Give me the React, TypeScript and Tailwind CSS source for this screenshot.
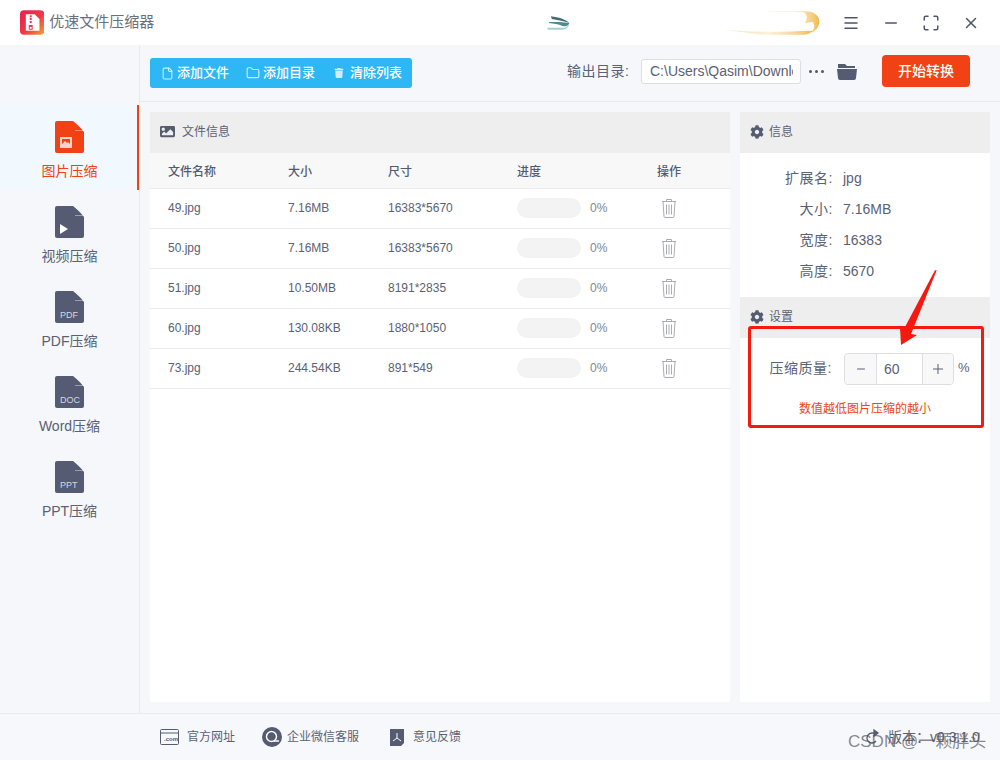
import { File, Folder, Menu, Minus, Maximize, X } from 'lucide-react';
import { FaCog, FaImage, FaTrash } from 'react-icons/fa';

const files = [
  { name: '49.jpg', size: '7.16MB', dim: '16383*5670' },
  { name: '50.jpg', size: '7.16MB', dim: '16383*5670' },
  { name: '51.jpg', size: '10.50MB', dim: '8191*2835' },
  { name: '60.jpg', size: '130.08KB', dim: '1880*1050' },
  { name: '73.jpg', size: '244.54KB', dim: '891*549' },
];

const details = [
  { label: '扩展名:', value: 'jpg' },
  { label: '大小:', value: '7.16MB' },
  { label: '宽度:', value: '16383' },
  { label: '高度:', value: '5670' },
];

const DocIcon = ({ color, children }: { color: string; children?: React.ReactNode }) => (
  <svg width="29" height="32" viewBox="0 0 29 32">
    <path d="M2 0H18C22 3 26 7 29 11V30a2 2 0 0 1-2 2H2a2 2 0 0 1-2-2V2a2 2 0 0 1 2-2Z" fill={color} />
    <path d="M20 9.5H29" fill="none" stroke="#fff" strokeOpacity="0.7" strokeWidth="0.6" />
    {children}
  </svg>
);

const NavItem = ({ label, active, icon }: { label: string; active?: boolean; icon: React.ReactNode }) => (
  <div
    className={`h-[85px] flex flex-col items-center pt-[16px] ${
      active ? 'bg-[#f2f9fe] text-[#f04214] shadow-[inset_-2px_0_0_#f04214]' : 'text-[#5a6175]'
    }`}
  >
    {icon}
    <span className="text-[14px] leading-[20px] mt-[8px]">{label}</span>
  </div>
);

const docLabel = (text: string) => (
  <text x="5" y="27" fontSize="9" fill="#d5d8e0" fontFamily="Liberation Sans, sans-serif">
    {text}
  </text>
);

const TrashIcon = () => (
  <svg width="16" height="20" viewBox="0 0 16 20" fill="none" stroke="#a8acb4" strokeWidth="1">
    <path d="M1 3.5H15M5.5 3.5V1.5H10.5V3.5M2 3.5L3 18.5a1 1 0 0 0 1 1H12a1 1 0 0 0 1-1L14 3.5" />
    <path d="M5.5 6.5V16.5M8 6.5V16.5M10.5 6.5V16.5" />
  </svg>
);

const App = () => {
  return (
    <div className="relative w-[1000px] h-[760px] overflow-hidden flex flex-col bg-[#f5f7fa] text-[#5a6175] font-['Liberation_Sans','Noto_Sans_CJK_SC',sans-serif]">
      {/* Title bar */}
      <header className="h-[45px] shrink-0 bg-white flex items-center pl-[20px] pr-[20px]">
        <svg width="25" height="25" viewBox="0 0 25 25">
          <defs>
            <linearGradient id="logo" x1="0" y1="0" x2="1" y2="1">
              <stop offset="0" stopColor="#ea1f4e" />
              <stop offset="0.55" stopColor="#ee3a45" />
              <stop offset="1" stopColor="#f8a52f" />
            </linearGradient>
          </defs>
          <rect width="25" height="25" rx="4" fill="url(#logo)" />
          <path d="M6 4H15L20 9V21H6Z" fill="#fff" />
          <path d="M10 5H12V7H10ZM10 8H12V10H10ZM10 11H12V13H10ZM9 15H13V20H9Z" fill="#ea3350" />
          <rect x="10" y="17" width="2" height="2" fill="#fff" />
        </svg>
        <span className="ml-[5px] w-[105px] text-[15px] whitespace-nowrap text-[#6a7080]">优速文件压缩器</span>
        <svg className="ml-[393px]" width="24" height="16" viewBox="0 0 24 16">
          <path d="M4 1C12 2 19 4 23 8C16 6 10 5 5 4Z" fill="#3f6d74" />
          <path d="M2 7C9 7 17 7 23 8C22 11 19 12 16 11C12 9 7 9 2 8Z" fill="#4f8a8f" />
          <path d="M0 13H16C19 13 21 12 23 9C22 13 19 15 15 15H1Z" fill="#a7cfcf" />
        </svg>
        <svg className="ml-[151px]" width="102" height="27" viewBox="0 0 102 27">
          <defs>
            <linearGradient id="fade" x1="0" y1="0" x2="1" y2="0">
              <stop offset="0" stopColor="#f3c877" stopOpacity="0.6" />
              <stop offset="0.5" stopColor="#f3c877" stopOpacity="0.25" />
              <stop offset="0.9" stopColor="#f0bc55" stopOpacity="0.8" />
              <stop offset="1" stopColor="#f0b64a" />
            </linearGradient>
          </defs>
          <path d="M2 21C30 24 62 23 94 22C90 25 88 26 84 26H42Z" fill="url(#fade)" />
          <path d="M44 2H86C96 2 101 8 100 14C99 19 96 22 92 24C95 19 96 16 93 13L85 14C88 9 88 6 84 3Z" fill="url(#fade)" />
        </svg>
        <div className="ml-[21px] flex items-center gap-[22px] text-[#4f566b]">
          <Menu size={18} strokeWidth={2} />
          <Minus size={18} strokeWidth={2} />
          <Maximize size={18} strokeWidth={2} />
          <X size={18} strokeWidth={2} />
        </div>
      </header>

      <div className="flex-1 flex min-h-0">
        {/* Sidebar */}
        <aside className="w-[140px] shrink-0 border-r border-[#e8eaee] pt-[60px]">
          <NavItem
            active
            label="图片压缩"
            icon={
              <DocIcon color="#f04214">
                <rect x="5" y="16" width="12" height="11" fill="#fbd6c8" />
                <rect x="7" y="18" width="8" height="5" fill="#f04214" />
                <path d="M7 23L10 20L12 22L13 21L15 23Z" fill="#fbd6c8" />
              </DocIcon>
            }
          />
          <NavItem
            label="视频压缩"
            icon={
              <DocIcon color="#545b73">
                <path d="M5 18L13 23L5 28Z" fill="#fff" />
              </DocIcon>
            }
          />
          <NavItem label="PDF压缩" icon={<DocIcon color="#545b73">{docLabel('PDF')}</DocIcon>} />
          <NavItem label="Word压缩" icon={<DocIcon color="#545b73">{docLabel('DOC')}</DocIcon>} />
          <NavItem label="PPT压缩" icon={<DocIcon color="#545b73">{docLabel('PPT')}</DocIcon>} />
        </aside>

        <div className="flex-1 min-w-0 flex flex-col">
          {/* Toolbar */}
          <div className="h-[57px] shrink-0 border-b border-[#e8eaee] flex items-start pl-[10px]">
            <div className="mt-[13px] h-[30px] w-[262px] rounded-[3px] bg-[#2db7f5] flex items-center pl-[11px] text-[13px] font-medium text-white">
              <File size={13} className="text-[#cdeefd]" />
              <span className="ml-[3px]">添加文件</span>
              <Folder size={14} className="ml-[17px] text-[#cdeefd]" />
              <span className="ml-[3px]">添加目录</span>
              <FaTrash size={10} className="ml-[19px] text-[#cdeefd]" />
              <span className="ml-[6px]">清除列表</span>
            </div>
            <span className="ml-[155px] mt-[16px] w-[63px] text-[14px] leading-[20px] tracking-[0.5px] whitespace-nowrap">输出目录:</span>
            <div className="ml-[11px] mt-[14px] w-[160px] h-[25px] rounded-[3px] border border-[#dcdee2] bg-white pl-[8px] text-[14px] leading-[23px] whitespace-nowrap">
              <div className="w-[143px] overflow-hidden">C:\Users\Qasim\Downloads</div>
            </div>
            <div className="ml-[8px] mt-[25px] flex gap-[3px]">
              <span className="w-[3px] h-[3px] rounded-full bg-[#4f566b]" />
              <span className="w-[3px] h-[3px] rounded-full bg-[#4f566b]" />
              <span className="w-[3px] h-[3px] rounded-full bg-[#4f566b]" />
            </div>
            <svg className="ml-[13px] mt-[17px]" width="20" height="18" viewBox="0 0 20 18">
              <path d="M1 2H8L10 4H18V6H1Z" fill="#545b73" />
              <path d="M0 7H20L19 16a2 2 0 0 1-2 2H3a2 2 0 0 1-2-2Z" fill="#545b73" />
            </svg>
            <button className="ml-[25px] mt-[10px] w-[88px] h-[32px] rounded-[4px] bg-[#f04214] text-white text-[14px] font-medium">
              开始转换
            </button>
          </div>

          {/* Panels */}
          <div className="h-[600px] shrink-0 flex gap-[10px] pl-[10px] pt-[10px]">
            <section className="w-[580px] h-[590px] bg-white">
              <div className="h-[41px] pb-[2px] bg-[#eeeeee] flex items-center pl-[10px] text-[12px]">
                <FaImage size={15} className="text-[#545b73]" />
                <span className="ml-[7px]">文件信息</span>
              </div>
              <div className="h-[36px] pt-[2px] bg-[#f8f8f9] border-b border-[#e8eaec] flex items-center text-[12px] font-medium text-[#515a6e]">
                <span className="w-[138px] pl-[18px]">文件名称</span>
                <span className="w-[100px]">大小</span>
                <span className="w-[129px]">尺寸</span>
                <span className="w-[140px]">进度</span>
                <span>操作</span>
              </div>
              {files.map((file) => (
                <div key={file.name} className="h-[40px] pb-[2px] border-b border-[#e8eaec] flex items-center text-[12px]">
                  <span className="w-[138px] pl-[18px]">{file.name}</span>
                  <span className="w-[100px]">{file.size}</span>
                  <span className="w-[129px]">{file.dim}</span>
                  <div className="w-[140px] flex items-center">
                    <div className="w-[64px] h-[20px] rounded-full bg-[#f3f3f3]" />
                    <span className="ml-[9px] text-[#808695]">0%</span>
                  </div>
                  <span className="ml-[4px]">
                    <TrashIcon />
                  </span>
                </div>
              ))}
            </section>

            <section className="w-[250px] h-[590px] bg-white">
              <div className="h-[41px] pb-[2px] bg-[#eeeeee] flex items-center pl-[10px] text-[12px]">
                <FaCog size={14} className="text-[#545b73]" />
                <span className="ml-[5px]">信息</span>
              </div>
              <div className="h-[144px] pt-[10px]">
                {details.map((row) => (
                  <div key={row.label} className="h-[31px] flex items-center text-[14px]">
                    <span className="w-[93px] text-right tracking-[0.5px]">{row.label}</span>
                    <span className="ml-[10px]">{row.value}</span>
                  </div>
                ))}
              </div>
              <div className="h-[41px] pb-[2px] bg-[#eeeeee] flex items-center pl-[10px] text-[12px]">
                <FaCog size={14} className="text-[#545b73]" />
                <span className="ml-[5px]">设置</span>
              </div>
              <div className="mt-[15px] flex items-center">
                <span className="w-[92px] pb-[2px] text-right text-[14px] tracking-[0.5px]">压缩质量:</span>
                <div className="ml-[12px] w-[110px] h-[32px] rounded-[4px] border border-[#dcdee2] flex items-center text-[#5a6175]">
                  <span className="w-[32px] h-full border-r border-[#dcdee2] bg-[#f8f8f9] rounded-l-[4px] flex items-center justify-center">
                    <Minus size={12} />
                  </span>
                  <span className="w-[45px] pl-[7px] text-[14px]">60</span>
                  <span className="flex-1 h-full border-l border-[#dcdee2] bg-[#f8f8f9] rounded-r-[4px] flex items-center justify-center">
                    <svg width="12" height="12" viewBox="0 0 12 12" stroke="#5a6175" strokeWidth="1">
                      <path d="M6 1V11M1 6H11" />
                    </svg>
                  </span>
                </div>
                <span className="ml-[4px] pb-[2px] text-[13px]">%</span>
              </div>
              <p className="mt-[16px] text-center text-[12px] leading-[17px] text-[#f04214]">数值越低图片压缩的越小</p>
            </section>
          </div>
        </div>
      </div>

      {/* Footer */}
      <footer className="h-[47px] shrink-0 border-t border-[#e8eaee] bg-[#f7f8fb] flex items-center pl-[160px] text-[12px] whitespace-nowrap">
        <svg width="19" height="16" viewBox="0 0 19 16" fill="none">
          <rect x="0.5" y="0.5" width="18" height="15" rx="1" stroke="#545b73" />
          <path d="M1 4H18" stroke="#545b73" />
          <text x="4" y="12" fontSize="6" fontWeight="700" fill="#545b73" fontFamily="Liberation Sans, sans-serif">.com</text>
        </svg>
        <span className="ml-[8px]">官方网址</span>
        <svg className="ml-[27px]" width="20" height="20" viewBox="0 0 20 20">
          <circle cx="10" cy="10" r="10" fill="#545b73" />
          <circle cx="9.5" cy="9.5" r="5" fill="none" stroke="#fff" strokeWidth="1.5" />
          <path d="M12 14L17 14" stroke="#fff" strokeWidth="1.5" />
        </svg>
        <span className="ml-[5px]">企业微信客服</span>
        <svg className="ml-[31px]" width="15" height="19" viewBox="0 0 15 19">
          <path d="M0 1H14V15L11 18H0Z" fill="#545b73" />
          <path d="M7 5V10M7 10L3 13M7 10L11 13" stroke="#fff" strokeWidth="1" fill="none" />
        </svg>
        <span className="ml-[8px]">意见反馈</span>
        <svg className="ml-[404px]" width="15" height="16" viewBox="0 0 15 16" fill="none" stroke="#545b73" strokeWidth="1.3">
          <path d="M10 4H7a5 5 0 1 0 4 8" />
          <path d="M9 1L13 4L9 7Z" fill="#545b73" />
        </svg>
        <span className="ml-[8px] text-[14px]">版本：v0.3.1.0</span>
      </footer>

      {/* Annotation drawn over the screenshot */}
      <div className="absolute left-[748px] top-[326px] w-[236px] h-[102px] rounded-[3px] border-[3px] border-[#f5190f]" />
      <svg className="absolute left-[895px] top-[268px]" width="45" height="80" viewBox="0 0 45 80">
        <path d="M41.7 2.3H40L10 59L5 60L6 77L22 67L16 66Z" fill="#f5190f" />
      </svg>
      <div className="absolute left-[848px] top-[731px] text-[17px] leading-[22px] text-[#55555a]/70 whitespace-nowrap">CSDN @一颗胖头</div>
    </div>
  );
};

export default App;
